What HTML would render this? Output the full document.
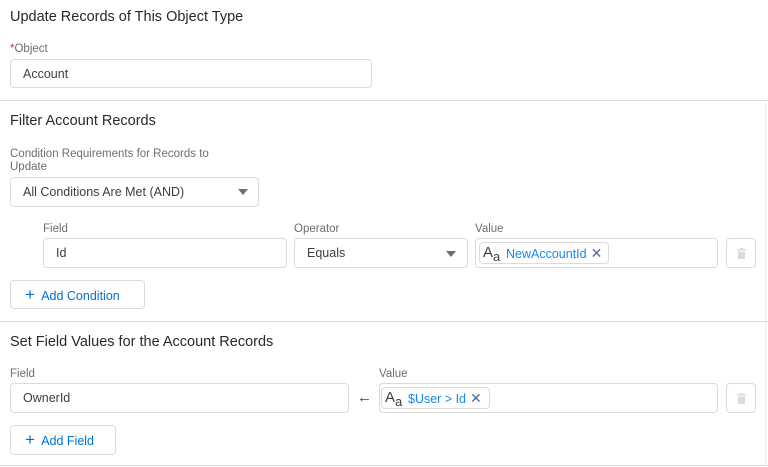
<!DOCTYPE html><html><head><style>
body{margin:0;width:768px;height:467px;background:#fff;font-family:"Liberation Sans",sans-serif;color:#3e3e3c;position:relative;overflow:hidden}
div,span{position:absolute;box-sizing:border-box}
.t{font-size:14.5px;color:#2b2826}
.l{font-size:11.5px;color:#706e6b}
.in{border:1px solid #dddbda;border-radius:4px;font-size:12.5px;color:#3e3e3c;padding-left:12px;line-height:29px}
.hr{left:0;width:768px;height:1px;background:#dddbda}
.pill{border:1px solid #dddbda;border-radius:4px;height:22px;font-size:12.5px;color:#1589ee;line-height:21px;padding-left:26px}
.aa{position:absolute;left:3px;top:-1px;color:#3e3e3c;font-size:15px}
.aa small{font-size:13px;position:relative;top:4px}
.x{color:#54698d;font-size:14px;margin-left:4px}
.caret{width:0;height:0;border-left:5px solid transparent;border-right:5px solid transparent;border-top:6px solid #706e6b}
.btn{border:1px solid #dddbda;border-radius:4px;font-size:12.5px;color:#0070d2;line-height:27px;padding-left:14px}
.trash{border:1px solid #dddbda;border-radius:4px;width:30px;height:30px}
</style></head><body>
<div class="t" style="left:10px;top:9px">Update Records of This Object Type</div>
<div class="l" style="left:10px;top:43px"><span style="position:static;color:#c23934">*</span>Object</div>
<div class="in" style="left:10px;top:59px;width:362px;height:29px">Account</div>
<div class="hr" style="top:100px"></div>
<div class="t" style="left:10px;top:113px">Filter Account Records</div>
<div class="l" style="left:10px;top:148px;line-height:13px">Condition Requirements for Records to<br>Update</div>
<div class="in" style="left:10px;top:177px;width:249px;height:30px">All Conditions Are Met (AND)</div>
<div class="caret" style="left:238px;top:189px"></div>
<div class="l" style="left:43px;top:223px">Field</div>
<div class="in" style="left:43px;top:238px;width:244px;height:30px">Id</div>
<div class="l" style="left:294px;top:223px">Operator</div>
<div class="in" style="left:294px;top:238px;width:174px;height:30px">Equals</div>
<div class="caret" style="left:446px;top:251px"></div>
<div class="l" style="left:475px;top:223px">Value</div>
<div class="in" style="left:475px;top:238px;width:243px;height:30px"></div>
<div class="pill" style="left:479px;top:242px;width:130px"><span class="aa">A<small>a</small></span>NewAccountId<span class="x" style="position:static">✕</span></div>
<div class="trash" style="left:726px;top:238px"><svg style="position:absolute;left:10px;top:9px" width="9" height="11" viewBox="0 0 9 11"><rect x="0" y="1" width="9" height="1.5" fill="#dddbda"/><rect x="3" y="0" width="3" height="1.5" fill="#dddbda"/><rect x="1" y="3.5" width="7" height="7.5" fill="#dddbda"/></svg></div>
<div class="btn" style="left:10px;top:280px;width:135px;height:29px"><span style="position:static;font-size:17px;color:#0070d2">+</span>&nbsp; Add Condition</div>
<div class="hr" style="top:321px"></div>
<div class="t" style="left:10px;top:334px">Set Field Values for the Account Records</div>
<div class="l" style="left:10px;top:368px">Field</div>
<div class="in" style="left:10px;top:383px;width:339px;height:30px">OwnerId</div>
<div style="left:357px;top:389px;font-size:15px;color:#3e3e3c">←</div>
<div class="l" style="left:379px;top:368px">Value</div>
<div class="in" style="left:379px;top:383px;width:339px;height:30px"></div>
<div class="pill" style="left:381px;top:387px;width:109px"><span class="aa">A<small>a</small></span>$User &gt; Id<span class="x" style="position:static">✕</span></div>
<div class="trash" style="left:726px;top:383px"><svg style="position:absolute;left:10px;top:9px" width="9" height="11" viewBox="0 0 9 11"><rect x="0" y="1" width="9" height="1.5" fill="#dddbda"/><rect x="3" y="0" width="3" height="1.5" fill="#dddbda"/><rect x="1" y="3.5" width="7" height="7.5" fill="#dddbda"/></svg></div>
<div class="btn" style="left:10px;top:425px;width:106px;height:30px"><span style="position:static;font-size:17px;color:#0070d2">+</span>&nbsp; Add Field</div>
<div class="hr" style="top:465px"></div>
<div style="left:765px;top:100px;width:1px;height:366px;background:#ececec"></div>
</body></html>
